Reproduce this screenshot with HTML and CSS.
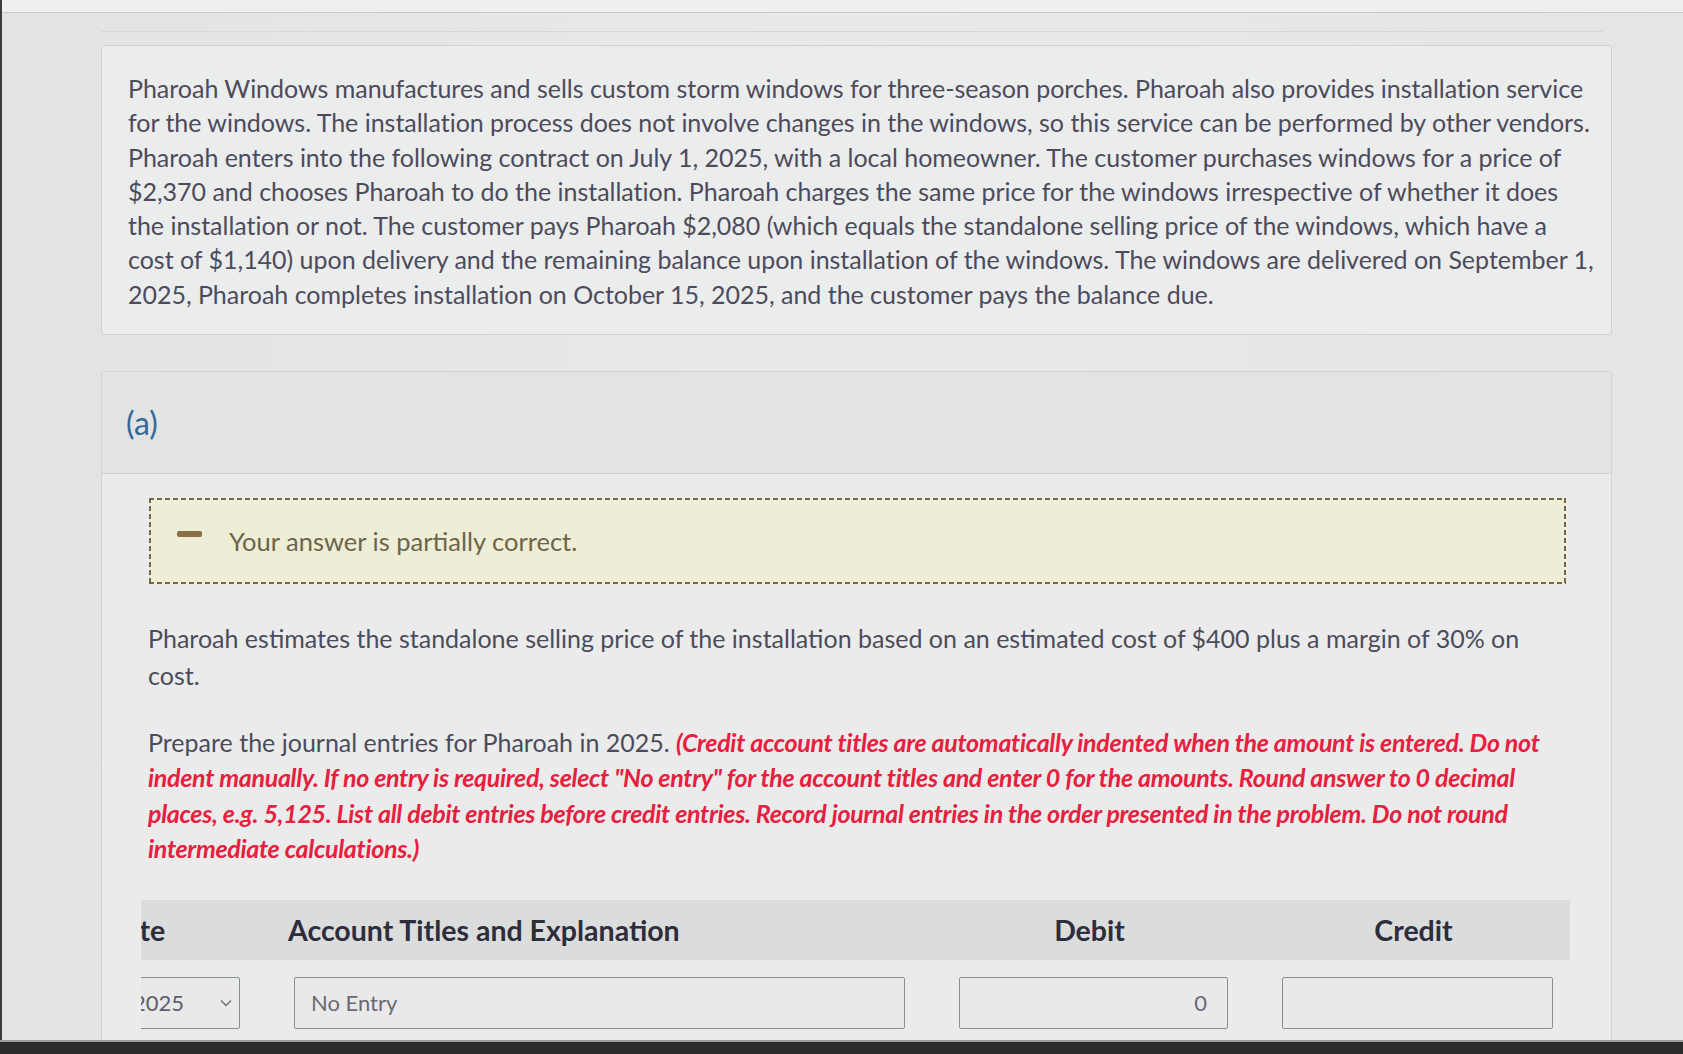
FILE: index.html
```html
<!DOCTYPE html>
<html lang="en">
<head>
<meta charset="utf-8">
<title>Pharoah Windows – Journal Entries</title>
<link rel="stylesheet" href="styles.css">
</head>
<body>
<div class="screen">
  <div class="topbar"></div>
  <main class="content">
    <div class="rule"></div>
    <section class="problem">
      <p>Pharoah Windows manufactures and sells custom storm windows for three-season porches. Pharoah also provides installation service<br>for the windows. The installation process does not involve changes in the windows, so this service can be performed by other vendors.<br>Pharoah enters into the following contract on July 1, 2025, with a local homeowner. The customer purchases windows for a price of<br>$2,370 and chooses Pharoah to do the installation. Pharoah charges the same price for the windows irrespective of whether it does<br>the installation or not. The customer pays Pharoah $2,080 (which equals the standalone selling price of the windows, which have a<br>cost of $1,140) upon delivery and the remaining balance upon installation of the windows. The windows are delivered on September 1,<br>2025, Pharoah completes installation on October 15, 2025, and the customer pays the balance due.</p>
    </section>

    <section class="part">
      <header class="part-head">(a)</header>
      <div class="part-body">
        <div class="feedback">
          <span class="minus"></span>
          <span class="feedback-text">Your answer is partially correct.</span>
        </div>
        <p class="para first">Pharoah estimates the standalone selling price of the installation based on an estimated cost of $400 plus a margin of 30% on cost.</p>
        <p class="para">Prepare the journal entries for Pharoah in 2025. <em class="note">(Credit account titles are automatically indented when the amount is entered. Do not indent manually. If no entry is required, select "No entry" for the account titles and enter 0 for the amounts. Round answer to 0 decimal places, e.g. 5,125. List all debit entries before credit entries. Record journal entries in the order presented in the problem. Do not round intermediate calculations.)</em></p>

        <div class="table-wrap">
          <div class="journal">
            <div class="head-row">
              <div class="th th-date">Date</div>
              <div class="th">Account Titles and Explanation</div>
              <div class="th th-num">Debit</div>
              <div class="th th-num">Credit</div>
            </div>
            <div class="row">
              <div class="select"><span class="sel-text">Sep. 1, 2025</span><svg class="chev" viewBox="0 0 12 8" width="12" height="8"><path d="M1 1.5 L6 6.5 L11 1.5" fill="none" stroke="#6b6f72" stroke-width="1.4"/></svg></div>
              <div class="input">No Entry</div>
              <div class="input num">0</div>
              <div class="input num"></div>
            </div>
          </div>
        </div>
      </div>
    </section>
  </main>
  <div class="bezel-left"></div>
  <div class="bezel-bottom"></div>
</div>
</body>
</html>
```

FILE: styles.css
```css
html, body {
  margin: 0;
  padding: 0;
}
body {
  background: #e5e6e6;
  font-family: Lato, "Open Sans", "Liberation Sans", sans-serif;
  color: #4c4b5c;
  overflow: hidden;
  width: 1683px;
  height: 1054px;
}
.screen {
  position: relative;
  width: 1683px;
  height: 1054px;
  overflow: hidden;
  background: linear-gradient(90deg, #e2e3e3 0%, #e8e9e9 50%, #e4e5e5 100%);
}
.topbar {
  height: 12px;
  background: #eeefef;
  border-bottom: 1px solid #c8caca;
}
.content {
  margin-left: 101px;
  width: 1511px;
}
.rule {
  margin-top: 18px;
  height: 1px;
  background: #d6d8d8;
  width: 1502px;
}
.problem {
  margin-top: 13px;
  background: #ebecec;
  border: 1px solid #cfd1d1;
  border-radius: 3px;
  padding: 25px 6px 23px 26px;
}
.problem p {
  margin: 0;
  font-size: 25px;
  line-height: 34.3px;
  letter-spacing: -0.02px;
}
.part {
  margin-top: 36px;
  border: 1px solid #d2d4d4;
  border-bottom: none;
  border-radius: 3px 3px 0 0;
  background: #eaebea;
}
.part-head {
  height: 101px;
  background: #e2e4e4;
  border-bottom: 1px solid #cfd1d1;
  display: flex;
  align-items: center;
  padding-left: 24px;
  font-size: 32px;
  color: #35689a;
}
.part-body {
  padding: 24px 45px 60px 46px;
}
.feedback {
  height: 86px;
  box-sizing: border-box;
  display: flex;
  align-items: center;
  padding-left: 28px;
  margin-left: 1px;
  background:
    repeating-linear-gradient(90deg, #7a6446 0 5px, transparent 5px 8px) top left / 100% 2px no-repeat,
    repeating-linear-gradient(90deg, #7a6446 0 5px, transparent 5px 8px) bottom left / 100% 2px no-repeat,
    repeating-linear-gradient(180deg, #7a6446 0 5px, transparent 5px 8px) top left / 2px 100% no-repeat,
    repeating-linear-gradient(180deg, #7a6446 0 5px, transparent 5px 8px) top right / 2px 100% no-repeat,
    #eeedd6;
}
.minus {
  width: 25px;
  height: 6px;
  border-radius: 2px;
  background: #8a6e45;
  margin-top: -14px;
}
.feedback-text {
  margin-left: 27px;
  font-size: 25.5px;
  color: #6c6549;
}
.para {
  margin: 32px 0 0 0;
  font-size: 25px;
  line-height: 35.4px;
}
.para.first {
  margin-top: 36px;
  line-height: 36.5px;
}
.note {
  color: #e6203e;
  font-weight: 700;
  font-style: italic;
  letter-spacing: -0.3px;
}
.table-wrap {
  margin-top: 33px;
  margin-left: -7px;
  width: 1432px;
  overflow: hidden;
}
.journal {
  margin-left: -31px;
}
.head-row {
  display: grid;
  grid-template-columns: 130px 611px 269px 271px;
  column-gap: 54px;
  height: 60px;
  align-items: center;
  background: #dbdcdc;
  width: 1460px;
}
.th {
  font-weight: 700;
  font-size: 28.5px;
  color: #2d2d3b;
}
.th-date {
  margin-left: -6px;
}
.th:nth-child(2) {
  margin-left: -6px;
}
.th-num {
  text-align: center;
  margin-left: -8px;
}
.row {
  display: grid;
  grid-template-columns: 130px 611px 269px 271px;
  column-gap: 54px;
  margin-top: 17px;
}
.select, .input {
  height: 52px;
  box-sizing: border-box;
  border: 1.5px solid #86938c;
  border-radius: 2px;
  background: #e8e9e8;
  font-size: 22px;
  color: #6a6a74;
  display: flex;
  align-items: center;
}
.select {
  justify-content: flex-end;
  overflow: hidden;
  padding-right: 7px;
  white-space: nowrap;
}
.sel-text {
  margin-right: 36px;
  color: #5e5e6a;
}
.chev {
  flex: none;
}
.input {
  padding-left: 16px;
}
.input.num {
  justify-content: flex-end;
  padding-right: 20px;
  padding-left: 0;
}
.bezel-left {
  position: absolute;
  left: 0;
  top: 0;
  width: 2px;
  height: 100%;
  background: #3a3b3c;
}
.bezel-bottom {
  position: absolute;
  left: 0;
  bottom: 0;
  width: 100%;
  height: 12px;
  background: #2a2b2c;
  border-top: 2px solid #9a9c9c;
}
```
